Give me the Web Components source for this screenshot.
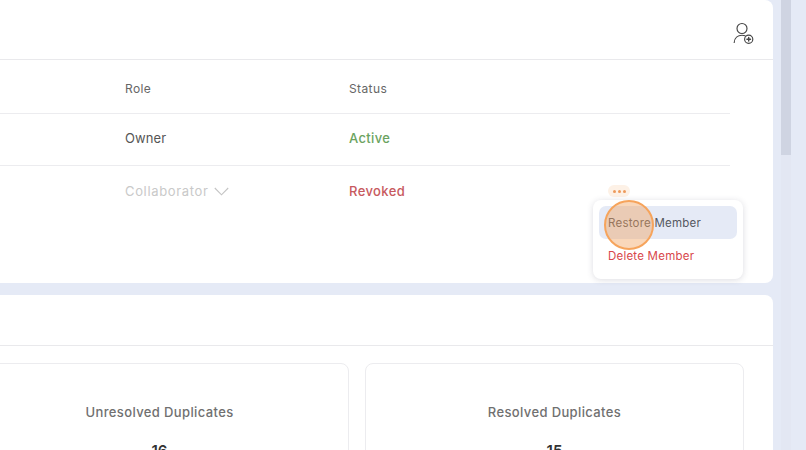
<!DOCTYPE html>
<html>
<head>
<meta charset="utf-8">
<title>Members</title>
<style>
  html, body { margin: 0; height: 100%; overflow: hidden; background: #e5eaf6; }
  body { font-family: "Inter", "Liberation Sans", sans-serif; }
</style>
</head>
<body>
<app-page>
  <panel-card slot="main" style="--card-h: 283px">
    <member-table></member-table>
  </panel-card>
  <panel-card slot="main" plain>
    <stat-box label="Unresolved Duplicates" value="16"></stat-box>
    <stat-box label="Resolved Duplicates" value="15"></stat-box>
  </panel-card>
</app-page>

<script>
class AppPage extends HTMLElement {
  constructor() {
    super();
    this.attachShadow({ mode: 'open' });
    this.shadowRoot.innerHTML = `
    <style>
    :host { display: flex; height: 450px; overflow: hidden; }
    .content {
      width: 773px;
      display: flex;
      flex-direction: column;
      gap: 12px;
      flex: none;
    }
    .rail {
      width: 33px;
      padding-left: 8px;
      box-sizing: border-box;
      flex: none;
    }
    .track {
      width: 10px;
      height: 100%;
      background: #e3e7f3;
    }
    .thumb {
      height: 155px;
      background: #cfd4e2;
    }
    </style>
    <div class="content"><slot name="main"></slot></div>
    <div class="rail"><div class="track"><div class="thumb"></div></div></div>
    `;
  }
}

class PanelCard extends HTMLElement {
  constructor() {
    super();
    this.attachShadow({ mode: 'open' });
    this.shadowRoot.innerHTML = `
    <style>
    :host {
      display: block;
      flex: none;
      height: var(--card-h, auto);
      background: #fff;
      border-radius: 0 8px 8px 0;
      box-sizing: border-box;
      position: relative;
    }
    .top {
      height: 59px;
      border-bottom: 1px solid #e9e9ec;
      display: flex;
      align-items: center;
      justify-content: flex-end;
      padding-right: 19px;
      box-sizing: content-box;
    }
    :host([plain]) .top { height: 50px; }
    :host([plain]) svg { display: none; }
    .body { display: block; }
    :host([plain]) .body {
      display: grid;
      grid-template-columns: 379px 379px;
      gap: 16px;
      margin: 17px 0 0 -30px;
    }
    </style>
    <div class="top">
      <svg width="22" height="28" viewBox="0 0 22 28" fill="none" stroke="#444" stroke-width="1.15" stroke-linecap="round">
        <circle cx="10" cy="12.5" r="5"/>
        <path d="M2.2 26.5c.3-4.5 3.6-7.3 7.8-7.3 1.2 0 2.2.2 3.1.6"/>
        <circle cx="16.7" cy="23.2" r="4.1"/>
        <path d="M16.7 21.4v3.6M14.9 23.2h3.6" stroke-width="1.4"/>
      </svg>
    </div>
    <div class="body"><slot></slot></div>
    `;
  }
}

class MemberTable extends HTMLElement {
  constructor() {
    super();
    this.attachShadow({ mode: 'open' });
    this.shadowRoot.innerHTML = `
    <style>
    :host {
      display: block;
      width: 730px;
      font-size: 13px;
      letter-spacing: 0.25px;
    }
    .row {
      display: grid;
      grid-template-columns: 125px 224px 259px 122px;
      align-items: center;
      border-bottom: 1px solid #ececef;
      box-sizing: border-box;
    }
    .row.head { height: 54px; padding-top: 4px; color: #666; font-size: 12px; letter-spacing: 0.4px; }
    .row.owner { height: 52px; padding-bottom: 4px; color: #555; letter-spacing: 0.1px; }
    .row.last { height: 52px; padding-bottom: 2px; border-bottom: 0; }
    .active { color: #6ba35f; font-weight: 500; letter-spacing: 0.35px; }
    .revoked { color: #c7595e; font-weight: 500; letter-spacing: 0.4px; }
    .locked {
      color: #c9c9c9;
      display: flex;
      align-items: center;
      gap: 6px;
      letter-spacing: 0.65px;
    }
    .dots {
      width: 22px;
      height: 12px;
      border-radius: 6px;
      background: #fdf1e6;
      display: flex;
      align-items: center;
      justify-content: center;
      gap: 2px;
    }
    .dots i {
      width: 3px;
      height: 3px;
      border-radius: 50%;
      background: #ee9a5b;
    }
    .menu {
      position: absolute;
      left: 593px;
      top: 200px;
    }
    </style>
    <div class="row head"><span></span><span>Role</span><span>Status</span><span></span></div>
    <div class="row owner"><span></span><span>Owner</span><span class="active">Active</span><span></span></div>
    <div class="row last">
      <span></span>
      <span class="locked">Collaborator
        <svg width="15" height="9" viewBox="0 0 15 9" fill="none" stroke="#c4c4c4" stroke-width="1.1"><path d="M.8 1l6.7 6.8L14.2 1"/></svg>
      </span>
      <span class="revoked">Revoked</span>
      <div class="dots"><i></i><i></i><i></i></div>
    </div>
    <action-menu class="menu"></action-menu>
    `;
  }
}

class ActionMenu extends HTMLElement {
  constructor() {
    super();
    this.attachShadow({ mode: 'open' });
    this.shadowRoot.innerHTML = `
    <style>
    :host {
      display: block;
      width: 150px;
      height: 79px;
      padding: 6px;
      box-sizing: border-box;
      background: #fff;
      border-radius: 8px;
      box-shadow: 0 1px 6px rgba(60, 60, 90, 0.18);
      font-size: 11.5px;
      letter-spacing: 0.22px;
    }
    .item {
      height: 33px;
      display: flex;
      align-items: center;
      padding-left: 9px;
      border-radius: 7px;
    }
    .restore { background: #e5eaf6; color: #55585f; }
    .delete { color: #d8474c; height: 34px; }
    .click {
      position: absolute;
      left: 11px;
      top: 0;
      width: 50px;
      height: 50px;
      border-radius: 50%;
      box-sizing: border-box;
      background: rgba(240, 160, 90, 0.42);
      border: 2px solid #f6a45c;
    }
    </style>
    <div class="item restore">Restore Member</div>
    <div class="item delete">Delete Member</div>
    <div class="click"></div>
    `;
  }
}

class StatBox extends HTMLElement {
  constructor() {
    super();
    this.attachShadow({ mode: 'open' });
    this.shadowRoot.innerHTML = `
    <style>
    :host {
      display: block;
      height: 200px;
      border: 1px solid #ececef;
      border-radius: 8px;
      box-sizing: border-box;
      text-align: center;
      padding-top: 40px;
    }
    .label { font-size: 13px; color: #707070; font-weight: 500; line-height: 17px; letter-spacing: 0.38px; }
    .value { font-size: 15px; color: #333; font-weight: 600; margin-top: 20px; line-height: 20px; }
    </style>
    <div class="label"></div>
    <div class="value"></div>
    `;
  }
  connectedCallback() {
    this.shadowRoot.querySelector('.label').textContent = this.getAttribute('label');
    this.shadowRoot.querySelector('.value').textContent = this.getAttribute('value');
  }
}

customElements.define('app-page', AppPage);
customElements.define('panel-card', PanelCard);
customElements.define('member-table', MemberTable);
customElements.define('action-menu', ActionMenu);
customElements.define('stat-box', StatBox);
</script>
</body>
</html>
